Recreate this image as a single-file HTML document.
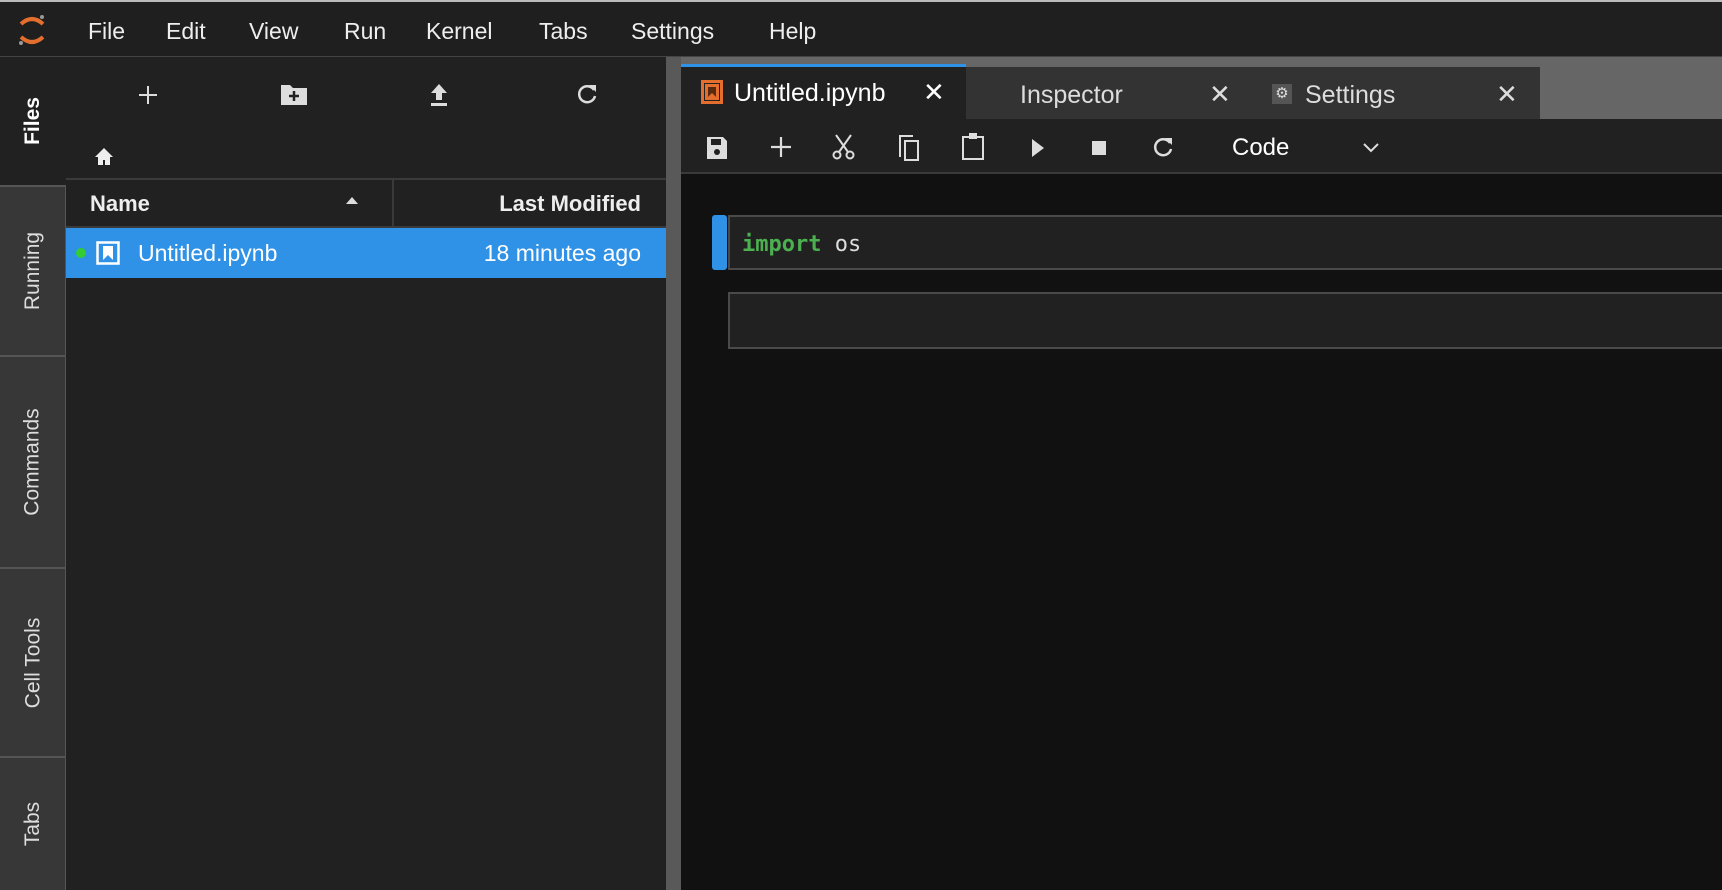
<!DOCTYPE html>
<html><head><meta charset="utf-8"><style>
*{box-sizing:border-box;margin:0;padding:0}
body{width:1722px;height:890px;background:#111;overflow:hidden;font-family:"Liberation Sans",sans-serif;color:#e8e8e8;position:relative}
.abs{position:absolute}
#menu{left:0;top:0;width:1722px;height:57px;background:#1f1f1f;border-top:2px solid #bbb;border-bottom:1px solid #444}
#menu span{position:absolute;top:16px;font-size:23px;color:#eee}
#side{left:0;top:57px;width:66px;height:833px;background:#373737;border-right:1px solid #555}
.st{position:absolute;left:0;width:66px;border-bottom:2px solid #555;display:flex;align-items:center;justify-content:center}
.st span{transform:rotate(-90deg);white-space:nowrap;font-size:21px;color:#ddd}
#fb{left:66px;top:57px;width:600px;height:833px;background:#212121}
#split{left:666px;top:57px;width:15px;height:833px;background:#595959}
#tabbar{left:681px;top:57px;width:1041px;height:62px;background:#666}
.tab{position:absolute;top:10px;height:52px;background:#333;font-size:25px;color:#ddd}
#tb{left:681px;top:119px;width:1041px;height:55px;background:#212121;border-bottom:2px solid #3a3a3a}
svg{position:absolute}
</style></head><body>
<div id="menu" class="abs">
<svg style="left:16px;top:8px" width="32" height="40" viewBox="0 0 32 40"><path d="M5 14 Q16 4 27 14" stroke="#e46e2e" stroke-width="4" fill="none"/><path d="M5 27 Q16 37 27 27" stroke="#e46e2e" stroke-width="4" fill="none"/><circle cx="26" cy="7" r="2" fill="#999"/><circle cx="5" cy="33" r="2" fill="#999"/></svg>
<span style="left:88px">File</span><span style="left:166px">Edit</span><span style="left:249px">View</span><span style="left:344px">Run</span><span style="left:426px">Kernel</span><span style="left:539px">Tabs</span><span style="left:631px">Settings</span><span style="left:769px">Help</span>
</div>
<div id="side" class="abs">
<div class="st" style="top:0;height:130px;background:#212121;"><span style="font-weight:bold;color:#fff">Files</span></div>
<div class="st" style="top:130px;height:170px"><span>Running</span></div>
<div class="st" style="top:300px;height:212px"><span>Commands</span></div>
<div class="st" style="top:512px;height:189px"><span>Cell Tools</span></div>
<div class="st" style="top:701px;height:132px;border:none"><span>Tabs</span></div>
</div>
<div id="fb" class="abs">
<svg style="left:70px;top:26px" width="24" height="24"><path d="M12 3v18M3 12h18" stroke="#ddd" stroke-width="2"/></svg>
<svg style="left:213px;top:24px" width="30" height="26"><path d="M2 4h9l3 3h14v17H2z" fill="#ddd"/><path d="M15 10v10M10 15h10" stroke="#212121" stroke-width="2.5"/></svg>
<svg style="left:361px;top:24px" width="24" height="28"><path d="M12 3l8 9h-5v7H9v-7H4z M4 22h16v3H4z" fill="#ddd"/></svg>
<svg style="left:508px;top:24px" width="26" height="26"><path d="M20 9A8 8 0 1 0 21 15" stroke="#ddd" stroke-width="2.5" fill="none"/><path d="M15 4h7v7z" fill="#ddd"/></svg>
<svg style="left:27px;top:88px" width="22" height="22"><path d="M11 3L2 12h3v8h5v-5h2v5h5v-8h3z" fill="#eee"/></svg>
<div class="abs" style="left:0;top:121px;width:600px;height:50px;border-top:2px solid #3a3a3a;border-bottom:2px solid #3a3a3a"></div>
<div class="abs" style="left:326px;top:121px;width:2px;height:50px;background:#3a3a3a"></div>
<div class="abs" style="left:24px;top:134px;font-size:22px;font-weight:bold;color:#eee">Name</div>
<svg style="left:279px;top:138px" width="14" height="10"><path d="M1 9L7 2L13 9z" fill="#ddd"/></svg>
<div class="abs" style="right:25px;top:134px;font-size:22px;font-weight:bold;color:#eee">Last Modified</div>
<div class="abs" style="left:0;top:171px;width:600px;height:50px;background:#2f92e6"></div>
<div class="abs" style="left:10px;top:191px;width:10px;height:10px;border-radius:50%;background:#3c3"></div>
<svg style="left:30px;top:184px" width="24" height="24"><rect x="1.5" y="1.5" width="21" height="21" fill="none" stroke="#fff" stroke-width="2.5"/><path d="M7 5h10v14l-5-5l-5 5z" fill="#fff"/></svg>
<div class="abs" style="left:72px;top:183px;font-size:23px;color:#fff">Untitled.ipynb</div>
<div class="abs" style="right:25px;top:183px;font-size:23px;color:#fff">18 minutes ago</div>
</div>
<div id="split" class="abs"></div>
<div id="tabbar" class="abs">
<div class="tab" style="left:0;width:285px;background:#212121;border-top:3px solid #2f92e6;top:7px;height:55px">
<svg style="left:20px;top:13px" width="22" height="24"><rect x="1.5" y="1.5" width="19" height="21" fill="none" stroke="#e46e2e" stroke-width="3"/><rect x="4" y="4" width="14" height="16" fill="#e46e2e"/><path d="M7 7h8v10l-4-4l-4 4z" fill="#5a2a10"/></svg>
<span class="abs" style="left:53px;top:12px;color:#fff">Untitled.ipynb</span><span class="abs" style="left:242px;top:10px;font-size:26px;color:#fff">✕</span></div>
<div class="tab" style="left:285px;width:286px"><span class="abs" style="left:54px;top:14px">Inspector</span><span class="abs" style="left:243px;top:12px;font-size:26px">✕</span></div>
<div class="tab" style="left:571px;width:288px"><span class="abs" style="left:20px;top:17px;width:20px;height:20px;background:#555;font-size:15px;text-align:center;line-height:20px">⚙</span><span class="abs" style="left:53px;top:14px">Settings</span><span class="abs" style="left:244px;top:12px;font-size:26px">✕</span></div>
</div>
<div id="tb" class="abs">
<svg style="left:24px;top:16px" width="24" height="26"><path d="M2 2h16l4 4v18H2z" fill="#ddd"/><rect x="6" y="4" width="10" height="6" fill="#212121"/><circle cx="12" cy="17" r="3" fill="#212121"/></svg>
<svg style="left:88px;top:16px" width="24" height="24"><path d="M12 2v20M2 12h20" stroke="#ddd" stroke-width="2.2"/></svg>
<svg style="left:150px;top:14px" width="26" height="28"><circle cx="6" cy="22" r="3.5" stroke="#ddd" stroke-width="2" fill="none"/><circle cx="19" cy="22" r="3.5" stroke="#ddd" stroke-width="2" fill="none"/><path d="M8 19L20 2M17 19L5 2" stroke="#ddd" stroke-width="2"/></svg>
<svg style="left:216px;top:14px" width="24" height="30"><path d="M3 24V3h13" stroke="#ddd" stroke-width="2" fill="none"/><rect x="8" y="8" width="13" height="19" stroke="#ddd" stroke-width="2" fill="none"/></svg>
<svg style="left:280px;top:12px" width="24" height="30"><rect x="2" y="6" width="20" height="22" stroke="#ddd" stroke-width="2" fill="none"/><rect x="8" y="2" width="8" height="6" fill="#ddd"/></svg>
<svg style="left:347px;top:18px" width="20" height="22"><path d="M4 2l12 9L4 20z" fill="#ddd"/></svg>
<svg style="left:409px;top:20px" width="18" height="18"><rect x="2" y="2" width="14" height="14" fill="#ddd"/></svg>
<svg style="left:469px;top:15px" width="26" height="26"><path d="M20 9A8 8 0 1 0 21 15" stroke="#ddd" stroke-width="2.5" fill="none"/><path d="M15 4h7v7z" fill="#ddd"/></svg>
<span class="abs" style="left:551px;top:15px;font-size:24px;color:#fff">Code</span>
<svg style="left:680px;top:22px" width="20" height="14"><path d="M3 3l7 7l7-7" stroke="#ddd" stroke-width="2" fill="none"/></svg>
</div>
<div class="abs" style="left:712px;top:215px;width:15px;height:55px;background:#2f92e6;border-radius:3px"></div>
<div class="abs" style="left:728px;top:215px;width:994px;height:55px;background:#212121;border:2px solid #4a4a4a;border-right:none"></div>
<div class="abs" style="left:742px;top:232px;font-family:'DejaVu Sans Mono','Liberation Mono',monospace;font-size:22px"><b style="color:#4caf50">import</b> <span style="color:#ddd">os</span></div>
<div class="abs" style="left:728px;top:292px;width:994px;height:57px;background:#212121;border:2px solid #4a4a4a;border-right:none"></div>
</body></html>
